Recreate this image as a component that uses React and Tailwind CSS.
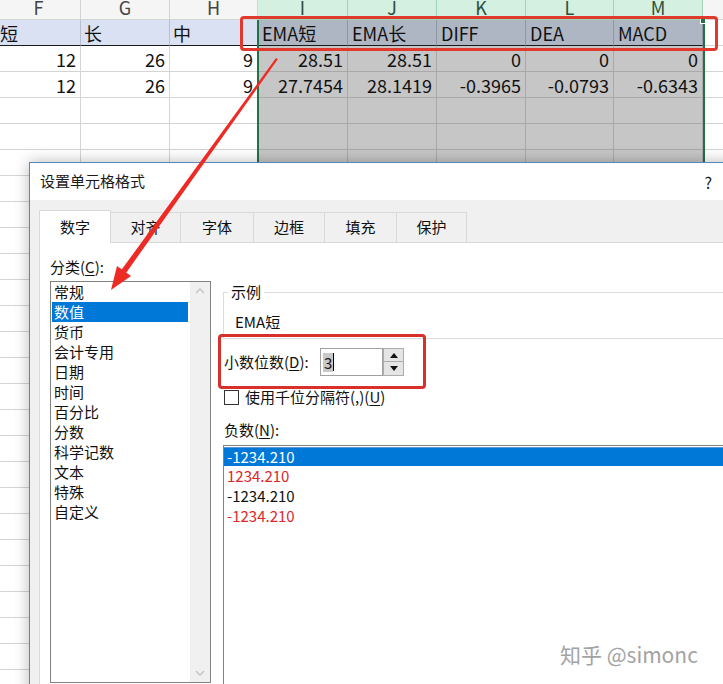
import React from 'react';

const font = { fontFamily: '"Noto Sans CJK SC", "Noto Sans", sans-serif' };

const cols = [
  { k: 'F', sel: false },
  { k: 'G', sel: false },
  { k: 'H', sel: false },
  { k: 'I', sel: true },
  { k: 'J', sel: true },
  { k: 'K', sel: true },
  { k: 'L', sel: true },
  { k: 'M', sel: true },
  { k: '', sel: false },
];

const labels = ['短', '长', '中', 'EMA短', 'EMA长', 'DIFF', 'DEA', 'MACD', ''];
const data = [
  ['12', '26', '9', '28.51', '28.51', '0', '0', '0', ''],
  ['12', '26', '9', '27.7454', '28.1419', '-0.3965', '-0.0793', '-0.6343', ''],
];

const categories = ['常规', '数值', '货币', '会计专用', '日期', '时间', '百分比', '分数', '科学记数', '文本', '特殊', '自定义'];
const tabs = [
  { name: '数字', w: 'w-[72px]' },
  { name: '对齐', w: 'w-[70px]' },
  { name: '字体', w: 'w-[73px]' },
  { name: '边框', w: 'w-[71px]' },
  { name: '填充', w: 'w-[72px]' },
  { name: '保护', w: 'w-[70px]' },
];

function Sheet() {
  const emptyRows = Array.from({ length: 23 });
  return (
    <div className="-ml-[3px] -mt-[6px] grid w-[746px] grid-cols-[84px_89px_88px_90px_89px_89px_88px_89px_40px] text-[18px] text-[#111]">
      {cols.map((c, i) => (
        <div
          key={'h' + i}
          className={
            c.sel
              ? 'flex h-[26px] items-center justify-center border-r border-b border-[#9fd4b6] bg-[#d3f0e0] text-[#2f4f3c] leading-none'
              : 'flex h-[26px] items-center justify-center border-r border-b border-[#d4d4d4] bg-[#f5f5f5] text-[#444] leading-none'
          }
        >
          {c.k}
        </div>
      ))}
      {labels.map((t, i) => (
        <div
          key={'l' + i}
          className={
            cols[i].sel
              ? 'flex h-[26px] items-center border-r border-b border-r-[#8e95a3] border-b-[#1a1a1a] bg-[#aeb5c3] px-[4px] leading-none'
              : cols[i].k
              ? 'flex h-[26px] items-center border-r border-b border-r-[#b7bfcf] border-b-[#1a1a1a] bg-[#d9e1f2] px-[3px] leading-none'
              : 'flex h-[26px] items-center border-r border-b border-[#d4d4d4] bg-white'
          }
        >
          {t}
        </div>
      ))}
      {data.map((row, r) =>
        row.map((v, i) => (
          <div
            key={'d' + r + '-' + i}
            className={
              cols[i].sel
                ? 'flex h-[26px] items-center justify-end border-r border-b border-[#a9a9a9] bg-[#c6c6c6] pr-[4px] leading-none'
                : 'flex h-[26px] items-center justify-end border-r border-b border-[#d4d4d4] bg-white pr-[4px] leading-none'
            }
          >
            {v}
          </div>
        ))
      )}
      {emptyRows.map((_, r) =>
        cols.map((c, i) => (
          <div
            key={'e' + r + '-' + i}
            className={
              c.sel
                ? 'h-[26px] border-r border-b border-[#a9a9a9] bg-[#c6c6c6]'
                : 'h-[26px] border-r border-b border-[#d4d4d4] bg-white'
            }
          />
        ))
      )}
    </div>
  );
}

function Dialog() {
  return (
    <div className="absolute left-[29px] top-[162px] w-[720px] h-[540px] border border-[#5b87b8] bg-[#f0f0f0] shadow-[0_0_14px_rgba(0,0,0,0.28)]">
      <div className="flex h-[37px] items-center justify-between bg-white pl-[10px] pr-[36px] text-[15px] text-[#1a1a1a]">
        <span>设置单元格格式</span>
        <span className="text-[16px]">?</span>
      </div>
      <div className="pl-[9px] pt-[10px]">
        <div className="flex h-[32px] items-end">
          {tabs.map((t, i) =>
            i === 0 ? (
              <div
                key={t.name}
                className={t.w + ' relative z-10 -mb-px flex h-[33px] items-center justify-center border border-b-0 border-[#d9d9d9] bg-white text-[15px] text-[#111]'}
              >
                {t.name}
              </div>
            ) : (
              <div
                key={t.name}
                className={t.w + ' flex h-[30px] items-center justify-center border border-l-0 border-b-0 border-[#d9d9d9] bg-[#f0f0f0] text-[15px] text-[#111]'}
              >
                {t.name}
              </div>
            )
          )}
        </div>
        <div className="h-[460px] border border-[#d9d9d9] bg-white pl-[10px] pt-[14px]">
          <div className="flex gap-[12px] text-[15px] text-[#111]">
            <div className="w-[161px]">
              <div className="h-[20px] leading-[20px]">
                分类(<span className="underline underline-offset-2">C</span>):
              </div>
              <div className="mt-[4px] flex h-[402px] border border-[#828282]">
                <div className="flex-1 pl-[1px]">
                  {categories.map((c, i) => (
                    <div
                      key={c}
                      className={
                        i === 1
                          ? 'mr-[2px] h-[20px] bg-[#0078d7] pl-[2px] leading-[20px] text-white'
                          : 'h-[20px] pl-[2px] leading-[20px]'
                      }
                    >
                      {c}
                    </div>
                  ))}
                </div>
                <div className="flex w-[20px] flex-col items-center justify-between bg-[#f0f0f0] py-[6px]">
                  <svg width="10" height="6" viewBox="0 0 10 6">
                    <path d="M1 5 L5 1 L9 5" fill="none" stroke="#c4c4c4" strokeWidth="1.4" />
                  </svg>
                  <svg width="10" height="6" viewBox="0 0 10 6">
                    <path d="M1 1 L5 5 L9 1" fill="none" stroke="#c4c4c4" strokeWidth="1.4" />
                  </svg>
                </div>
              </div>
            </div>
            <div className="flex-1 pt-[35px]">
              <div className="relative h-[47px] border-t border-b border-l border-[#dcdcdc]">
                <span className="absolute -top-[11px] left-[4px] bg-white px-[3px] leading-[20px]">示例</span>
                <div className="pl-[11px] pt-[19px] leading-[20px]">EMA短</div>
              </div>
              <div className="mt-[9px] flex h-[28px] items-center pl-[1px]">
                <span className="w-[96px]">
                  小数位数(<span className="underline underline-offset-2">D</span>):
                </span>
                <div className="flex h-[28px] w-[63px] items-center border border-[#a0a0a0] pl-[2px]">
                  <span className="bg-[#c8c8c8] px-[1px] leading-[19px]">3</span>
                  <span className="h-[18px] w-px bg-black" />
                </div>
                <div className="flex h-[28px] w-[21px] flex-col">
                  <div className="flex h-[14px] items-center justify-center border border-[#adadad] bg-[#e5e5e5]">
                    <svg width="8" height="5" viewBox="0 0 8 5">
                      <path d="M0 5 L4 0 L8 5 Z" fill="#111" />
                    </svg>
                  </div>
                  <div className="flex h-[14px] items-center justify-center border border-t-0 border-[#adadad] bg-[#e5e5e5]">
                    <svg width="8" height="5" viewBox="0 0 8 5">
                      <path d="M0 0 L4 5 L8 0 Z" fill="#111" />
                    </svg>
                  </div>
                </div>
              </div>
              <div className="mt-[11px] flex h-[20px] items-center pl-[1px]">
                <span className="h-[15px] w-[15px] border border-[#333]" />
                <span className="ml-[6px] leading-[20px]">
                  使用千位分隔符(,)(<span className="underline underline-offset-2">U</span>)
                </span>
              </div>
              <div className="mt-[13px] h-[20px] pl-[1px] leading-[20px]">
                负数(<span className="underline underline-offset-2">N</span>):
              </div>
              <div className="mt-[5px] h-[240px] border border-[#828282] pt-px">
                <div className="h-[19px] border-t border-[#5a9ad0] bg-[#0078d7] pl-[3px] leading-[18px] text-white">-1234.210</div>
                <div className="h-[20px] pl-[3px] leading-[20px] text-[#e0262b]">1234.210</div>
                <div className="h-[20px] pl-[3px] leading-[20px] text-[#111]">-1234.210</div>
                <div className="h-[20px] pl-[3px] leading-[20px] text-[#e0262b]">-1234.210</div>
              </div>
            </div>
          </div>
        </div>
      </div>
    </div>
  );
}

export default function App() {
  return (
    <div className="relative h-[684px] w-[723px] overflow-hidden bg-white" style={font}>
      <Sheet />
      {/* selection outline around I:M */}
      <div className="pointer-events-none absolute left-[257px] top-[20px] h-[700px] w-[448px] border-x-2 border-[#217346]" />
      <div className="pointer-events-none absolute left-[700px] top-[18px] h-[6px] w-[6px] border border-white bg-[#217346]" />
      {/* annotation: header box */}
      <div className="pointer-events-none absolute left-[240px] top-[16px] h-[35px] w-[478px] rounded-[4px] border-[3px] border-[#e03a2f]" />
      <Dialog />
      {/* annotation: decimal box */}
      <div className="pointer-events-none absolute left-[218px] top-[334px] h-[55px] w-[208px] rounded-[4px] border-[3px] border-[#d9302c]" />
      <svg className="pointer-events-none absolute left-0 top-0" width="723" height="684" viewBox="0 0 723 684">
        <path d="M276 58 L277.8 59.3 L126 273 L121.5 269.8 Z" fill="#ee2a24" />
        <path d="M111 290 L117 266 L131 276 Z" fill="#ee2a24" />
      </svg>
      <div className="absolute left-[560px] top-[640px] text-[21px] leading-[28px] text-[#a3a3a3] [text-shadow:0_0_2px_#fff]">
        知乎 @simonc
      </div>
    </div>
  );
}
